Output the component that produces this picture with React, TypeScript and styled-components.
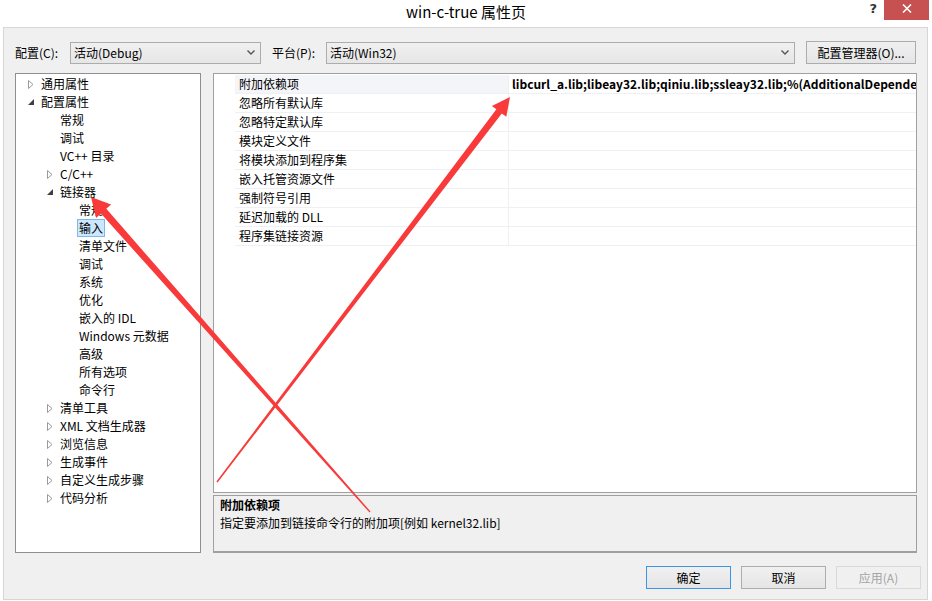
import React from "react";
import styled, { createGlobalStyle } from "styled-components";

const Global = createGlobalStyle`
  html, body { margin: 0; padding: 0; background: #ffffff; }
  body {
    font-family: "Noto Sans CJK SC", "Noto Sans", sans-serif;
    font-size: 12px;
    color: #000;
  }
  * { box-sizing: border-box; }
`;

const Window = styled.div`
  position: relative;
  width: 932px;
  height: 601px;
  background: #ffffff;
  display: flex;
  flex-direction: column;
  overflow: hidden;
`;

const TitleBar = styled.div`
  height: 27px;
  flex: none;
  display: grid;
  grid-template-columns: 1fr auto 1fr;
  align-items: start;
`;

const Title = styled.div`
  grid-column: 2;
  font-size: 15px;
  line-height: 24px;
  color: #000;
  white-space: nowrap;
`;

const TitleControls = styled.div`
  grid-column: 3;
  display: flex;
  justify-content: flex-end;
  align-items: flex-start;
  padding-right: 3px;
`;

const Help = styled.span`
  font-family: "DejaVu Sans", sans-serif;
  font-size: 13px;
  font-weight: bold;
  line-height: 17px;
  color: #333;
  margin-right: 7px;
`;

const CloseButton = styled.div`
  width: 45px;
  height: 20px;
  background: #c75050;
  display: flex;
  align-items: center;
  justify-content: center;
  padding-bottom: 3px;
`;

const Client = styled.div`
  flex: 1;
  margin: 0 4px 1px 3px;
  border: 1px solid #d6d6d6;
  background: #f0f0f0;
  padding: 13px 9px 0 11px;
  display: flex;
  flex-direction: column;
`;

const ConfigRow = styled.div`
  display: flex;
  align-items: center;
  height: 23px;
`;

const FieldLabel = styled.span<{ $w: number; $ml?: number }>`
  width: ${(p) => p.$w}px;
  margin-left: ${(p) => p.$ml ?? 0}px;
  line-height: 22px;
  white-space: nowrap;
`;

const Combo = styled.div<{ $w: number }>`
  width: ${(p) => p.$w}px;
  height: 22px;
  border: 1px solid #acacac;
  background: linear-gradient(#f0f0f0, #e6e6e6);
  display: flex;
  align-items: center;
  justify-content: space-between;
  padding: 0 5px 0 3px;
  line-height: 20px;
`;

const ToolButton = styled.div<{ $w: number; $ml?: number }>`
  width: ${(p) => p.$w}px;
  margin-left: ${(p) => p.$ml ?? 0}px;
  height: 23px;
  border: 1px solid #acacac;
  background: linear-gradient(#f0f0f0, #e5e5e5);
  display: flex;
  align-items: center;
  justify-content: center;
  line-height: 20px;
`;

const Main = styled.div`
  margin-top: 9px;
  display: grid;
  grid-template-columns: 186px 704px;
  column-gap: 12px;
  height: 480px;
`;

const Tree = styled.div`
  border: 1px solid #8e8f94;
  background: #fff;
  padding-top: 1px;
  overflow: hidden;
`;

const TreeRow = styled.div<{ $level: number }>`
  height: 18px;
  display: flex;
  align-items: center;
  padding-left: ${(p) => 7 + p.$level * 19}px;
  white-space: nowrap;
`;

const Glyph = styled.span`
  width: 16px;
  height: 18px;
  flex: none;
  display: flex;
  align-items: center;
  padding-left: 5px;
`;

const TreeLabel = styled.span<{ $selected?: boolean }>`
  line-height: 16px;
  padding: 0 1px;
  border: 1px solid ${(p) => (p.$selected ? "#7db9e8" : "transparent")};
  background: ${(p) => (p.$selected ? "#cce8ff" : "transparent")};
`;

const RightCol = styled.div`
  display: flex;
  flex-direction: column;
  gap: 2px;
`;

const PropGrid = styled.div`
  height: 420px;
  border: 1px solid #a0a0a0;
  background: #fff;
  padding-top: 1px;
  overflow: hidden;
`;

const PropRow = styled.div`
  display: grid;
  grid-template-columns: 21px 274px 1fr;
  height: 19px;
`;

const Gutter = styled.div``;

const NameCell = styled.div<{ $active?: boolean }>`
  border-bottom: 1px solid #f0f0f4;
  border-right: 1px solid #f0f0f4;
  background: ${(p) => (p.$active ? "#f4f5f9" : "#fff")};
  padding-left: 4px;
  line-height: 18px;
  white-space: nowrap;
  overflow: hidden;
`;

const ValueCell = styled.div`
  border-bottom: 1px solid #f0f0f4;
  padding-left: 3px;
  line-height: 18px;
  font-weight: bold;
  white-space: nowrap;
  overflow: hidden;
`;

const Desc = styled.div`
  height: 58px;
  border: 1px solid #a0a0a0;
  border-bottom-width: 2px;
  background: #f0f0f0;
  padding: 0 6px;
`;

const DescTitle = styled.div`
  font-weight: bold;
  line-height: 18px;
`;

const DescText = styled.div`
  line-height: 18px;
`;

const Buttons = styled.div`
  margin-top: 13px;
  margin-right: -3px;
  display: flex;
  justify-content: flex-end;
  gap: 10px;
`;

const DialogButton = styled.div<{ $variant?: "default" | "normal" | "disabled" }>`
  width: 85px;
  height: 23px;
  display: flex;
  align-items: center;
  justify-content: center;
  line-height: 20px;
  border: 1px solid
    ${(p) =>
      p.$variant === "default" ? "#3c96e6" : p.$variant === "disabled" ? "#d9d9d9" : "#adadad"};
  background: ${(p) =>
    p.$variant === "disabled" ? "#f0f0f0" : "linear-gradient(#f0f0f0, #e5e5e5)"};
  color: ${(p) => (p.$variant === "disabled" ? "#a3a3a3" : "#000")};
`;

const Overlay = styled.svg`
  position: absolute;
  left: 0;
  top: 0;
  pointer-events: none;
`;

const Chevron = () => (
  <svg width="8" height="5" viewBox="0 0 8 5">
    <path d="M0.5 0.5 L4 4 L7.5 0.5" fill="none" stroke="#555" strokeWidth="1.4" />
  </svg>
);

const Collapsed = () => (
  <svg width="6" height="9" viewBox="0 0 6 9">
    <path d="M0.5 0.5 L5 4.5 L0.5 8.5 Z" fill="#fff" stroke="#9a9a9a" strokeWidth="1" />
  </svg>
);

const Expanded = () => (
  <svg width="6" height="6" viewBox="0 0 6 6">
    <path d="M6 0 L6 6 L0 6 Z" fill="#404040" />
  </svg>
);

type Item = { label: string; level: number; state?: "open" | "closed"; selected?: boolean };

const treeItems: Item[] = [
  { label: "通用属性", level: 0, state: "closed" },
  { label: "配置属性", level: 0, state: "open" },
  { label: "常规", level: 1 },
  { label: "调试", level: 1 },
  { label: "VC++ 目录", level: 1 },
  { label: "C/C++", level: 1, state: "closed" },
  { label: "链接器", level: 1, state: "open" },
  { label: "常规", level: 2 },
  { label: "输入", level: 2, selected: true },
  { label: "清单文件", level: 2 },
  { label: "调试", level: 2 },
  { label: "系统", level: 2 },
  { label: "优化", level: 2 },
  { label: "嵌入的 IDL", level: 2 },
  { label: "Windows 元数据", level: 2 },
  { label: "高级", level: 2 },
  { label: "所有选项", level: 2 },
  { label: "命令行", level: 2 },
  { label: "清单工具", level: 1, state: "closed" },
  { label: "XML 文档生成器", level: 1, state: "closed" },
  { label: "浏览信息", level: 1, state: "closed" },
  { label: "生成事件", level: 1, state: "closed" },
  { label: "自定义生成步骤", level: 1, state: "closed" },
  { label: "代码分析", level: 1, state: "closed" },
];

const props: { name: string; value?: string }[] = [
  { name: "附加依赖项", value: "libcurl_a.lib;libeay32.lib;qiniu.lib;ssleay32.lib;%(AdditionalDependencies)" },
  { name: "忽略所有默认库" },
  { name: "忽略特定默认库" },
  { name: "模块定义文件" },
  { name: "将模块添加到程序集" },
  { name: "嵌入托管资源文件" },
  { name: "强制符号引用" },
  { name: "延迟加载的 DLL" },
  { name: "程序集链接资源" },
];

type P = [number, number];

function arrowPoints(tail: P, tip: P, headLen: number, headHalf: number, wTail: number, wHead: number) {
  const dx = tip[0] - tail[0];
  const dy = tip[1] - tail[1];
  const len = Math.hypot(dx, dy);
  const ux = dx / len;
  const uy = dy / len;
  const px = -uy;
  const py = ux;
  const base: P = [tip[0] - ux * headLen, tip[1] - uy * headLen];
  const pts: P[] = [
    [tail[0] + px * wTail, tail[1] + py * wTail],
    [base[0] + px * wHead, base[1] + py * wHead],
    [base[0] + px * headHalf, base[1] + py * headHalf],
    tip,
    [base[0] - px * headHalf, base[1] - py * headHalf],
    [base[0] - px * wHead, base[1] - py * wHead],
    [tail[0] - px * wTail, tail[1] - py * wTail],
  ];
  return pts.map((p) => `${p[0].toFixed(1)},${p[1].toFixed(1)}`).join(" ");
}

export default function App() {
  return (
    <>
      <Global />
      <Window>
        <TitleBar>
          <Title>win-c-true 属性页</Title>
          <TitleControls>
            <Help>?</Help>
            <CloseButton>
              <svg width="10" height="9" viewBox="0 0 10 9">
                <path d="M1 0.5 L9 8.5 M9 0.5 L1 8.5" stroke="#fff" strokeWidth="1.6" />
              </svg>
            </CloseButton>
          </TitleControls>
        </TitleBar>
        <Client>
          <ConfigRow>
            <FieldLabel $w={55}>配置(C):</FieldLabel>
            <Combo $w={191}>
              <span>活动(Debug)</span>
              <Chevron />
            </Combo>
            <FieldLabel $w={54} $ml={11}>平台(P):</FieldLabel>
            <Combo $w={469}>
              <span>活动(Win32)</span>
              <Chevron />
            </Combo>
            <ToolButton $w={110} $ml={11}>配置管理器(O)...</ToolButton>
          </ConfigRow>
          <Main>
            <Tree>
              {treeItems.map((it, i) => (
                <TreeRow key={i} $level={it.level}>
                  <Glyph>
                    {it.state === "closed" && <Collapsed />}
                    {it.state === "open" && <Expanded />}
                  </Glyph>
                  <TreeLabel $selected={it.selected}>{it.label}</TreeLabel>
                </TreeRow>
              ))}
            </Tree>
            <RightCol>
              <PropGrid>
                {props.map((p, i) => (
                  <PropRow key={i}>
                    <Gutter />
                    <NameCell $active={i === 0}>{p.name}</NameCell>
                    <ValueCell>{p.value ?? ""}</ValueCell>
                  </PropRow>
                ))}
              </PropGrid>
              <Desc>
                <DescTitle>附加依赖项</DescTitle>
                <DescText>指定要添加到链接命令行的附加项[例如 kernel32.lib]</DescText>
              </Desc>
            </RightCol>
          </Main>
          <Buttons>
            <DialogButton $variant="default">确定</DialogButton>
            <DialogButton>取消</DialogButton>
            <DialogButton $variant="disabled">应用(A)</DialogButton>
          </Buttons>
        </Client>
        <Overlay width="932" height="601" viewBox="0 0 932 601">
          <polygon points={arrowPoints([370, 512], [91, 197], 19, 10, 0.7, 3.6)} fill="#f83a3a" />
          <polygon points={arrowPoints([217, 482], [510, 97], 18, 9, 0.7, 3.4)} fill="#f83a3a" />
        </Overlay>
      </Window>
    </>
  );
}
